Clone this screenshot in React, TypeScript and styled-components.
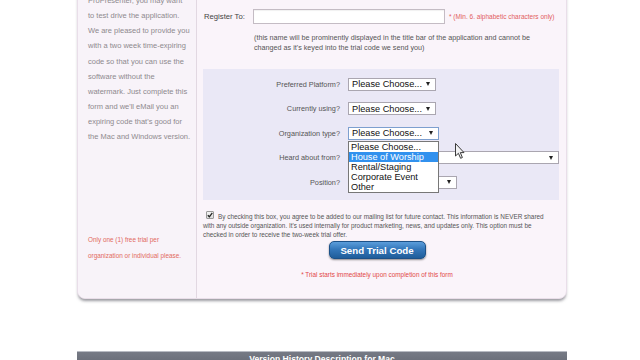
import React from 'react';
import styled, { createGlobalStyle } from 'styled-components';

const Global = createGlobalStyle`
  html, body { margin: 0; padding: 0; background: #ffffff; }
  body { font-family: "Liberation Sans", Arial, sans-serif; }
  #root { width: 640px; height: 360px; overflow: hidden; }
`;

const Page = styled.div`
  position: relative;
  width: 640px;
  height: 360px;
  overflow: hidden;
`;

const Card = styled.div`
  margin: -12px 0 0 77px;
  width: 490px;
  height: 311px;
  box-sizing: border-box;
  display: grid;
  grid-template-columns: 119px 1fr;
  background: #faf4fa;
  border: 1px solid #e9dee9;
  border-radius: 0 0 8px 8px;
  box-shadow: 0 3px 3px -1px rgba(70, 70, 80, 0.55);
`;

const Side = styled.div`
  box-sizing: border-box;
  border-right: 1px solid #e2d8e2;
  padding: 4px 0 0 10px;
  background: #f8f3f9;
  border-radius: 0 0 0 8px;
`;

const Intro = styled.div`
  font-size: 7.5px;
  line-height: 15.15px;
  color: #8e8a8e;
  white-space: nowrap;
`;

const Limit = styled.div`
  margin-top: 87.5px;
  font-size: 6.4px;
  line-height: 16px;
  color: #e26a60;
  white-space: nowrap;
`;

const Main = styled.div`
  padding-top: 20px;
`;

const RegisterRow = styled.div`
  display: flex;
  align-items: center;
  padding-left: 7px;
`;

const RegLabel = styled.span`
  width: 49px;
  font-size: 7.7px;
  color: #444;
`;

const TextInput = styled.div`
  width: 192px;
  height: 15px;
  box-sizing: border-box;
  background: #fff;
  border: 1px solid #c4bcc4;
  box-shadow: inset 0 1px 1px rgba(0, 0, 0, 0.06);
`;

const Hint = styled.span`
  margin-left: 4px;
  font-size: 6.5px;
  color: #e26060;
  white-space: nowrap;
`;

const Note = styled.div`
  margin: 8.7px 0 0 57px;
  font-size: 7.2px;
  line-height: 10px;
  color: #555;
  white-space: nowrap;
`;

const Panel = styled.div`
  margin: 16px 0 0 6px;
  width: 356px;
  box-sizing: border-box;
  padding: 9px 0 11px;
  background: #eae8f6;
  display: grid;
  grid-template-columns: 137px auto;
  column-gap: 8px;
  row-gap: 11.5px;
  align-items: center;
`;

const FieldLabel = styled.span`
  text-align: right;
  font-size: 7.3px;
  color: #555;
  white-space: nowrap;
`;

const SelectBox = styled.div<{ $w: number; $focus?: boolean }>`
  position: relative;
  justify-self: start;
  width: ${p => p.$w}px;
  height: 13px;
  box-sizing: border-box;
  display: flex;
  align-items: center;
  justify-content: space-between;
  padding: 0 5px 0 3px;
  background: #fff;
  border: 1px solid ${p => (p.$focus ? '#7d9fcf' : '#aaa6b0')};
  font-size: 9.2px;
  color: #111;
  white-space: nowrap;
`;

const Arrow = styled.span`
  width: 0;
  height: 0;
  border-left: 2.5px solid transparent;
  border-right: 2.5px solid transparent;
  border-top: 4px solid #222;
`;

const List = styled.div`
  position: absolute;
  z-index: 10;
  top: calc(100% + 2px);
  left: -1px;
  width: 91px;
  box-sizing: border-box;
  background: #fff;
  border: 1px solid #777;
`;

const Option = styled.div<{ $active?: boolean }>`
  height: 10px;
  line-height: 10px;
  padding-left: 2px;
  font-size: 9.2px;
  color: ${p => (p.$active ? '#fff' : '#111')};
  background: ${p => (p.$active ? '#3191ee' : 'transparent')};
`;

const Consent = styled.div`
  margin: 12px 0 0 6px;
  font-size: 6.4px;
  color: #555;
  white-space: nowrap;
`;

const ConsentLine = styled.div`
  height: 9px;
  line-height: 9px;
  display: flex;
  align-items: center;
`;

const Check = styled.span`
  display: inline-flex;
  align-items: center;
  justify-content: center;
  width: 8px;
  height: 8px;
  box-sizing: border-box;
  margin: -3px 4.5px 0 2.5px;
  border: 1px solid #9a9a9a;
  background: linear-gradient(#f4f4f4, #dcdcdc);
  border-radius: 1px;
`;

const Actions = styled.div`
  width: 360px;
  margin-top: 2.5px;
  display: flex;
  flex-direction: column;
  align-items: center;
`;

const SendButton = styled.button`
  width: 97px;
  height: 18px;
  padding: 0;
  border: 1px solid #1c5188;
  border-radius: 5px;
  background: linear-gradient(#5b9ddb 0%, #3477ba 45%, #1f5d9a 100%);
  box-shadow: 0 1px 2px rgba(0, 0, 0, 0.45);
  color: #fff;
  font-family: "Liberation Sans", Arial, sans-serif;
  font-weight: bold;
  font-size: 9.7px;
`;

const TrialNote = styled.div`
  margin-top: 11.5px;
  font-size: 6.4px;
  line-height: 8px;
  color: #e24848;
  white-space: nowrap;
`;

const VersionBar = styled.div`
  margin: 52px 0 0 77px;
  width: 490px;
  height: 20px;
  box-sizing: border-box;
  padding-top: 2px;
  background: linear-gradient(#767a85, #5f636e);
  border-top: 1px solid #b8bbc3;
  color: #fff;
  font-weight: bold;
  font-size: 8.6px;
  text-align: center;
`;

const Cursor = styled.svg`
  position: absolute;
  left: 455px;
  top: 143px;
  z-index: 20;
`;

const introLines = [
  'ProPresenter, you may want',
  'to test drive the application.',
  'We are pleased to provide you',
  'with a two week time-expiring',
  'code so that you can use the',
  'software without the',
  'watermark. Just complete this',
  "form and we'll eMail you an",
  "expiring code that's good for",
  'the Mac and Windows version.',
];

const fields = [
  { label: 'Preferred Platform?', w: 88 },
  { label: 'Currently using?', w: 88 },
  { label: 'Organization type?', w: 91, open: true },
  { label: 'Heard about from?', w: 211 },
  { label: 'Position?', w: 109 },
];

const options = ['Please Choose...', 'House of Worship', 'Rental/Staging', 'Corporate Event', 'Other'];

export default function App() {
  return (
    <Page>
      <Global />
      <Card>
        <Side>
          <Intro>
            {introLines.map(l => (
              <div key={l}>{l}</div>
            ))}
          </Intro>
          <Limit>
            <div>Only one (1) free trial per</div>
            <div>organization or individual please.</div>
          </Limit>
        </Side>
        <Main>
          <RegisterRow>
            <RegLabel>Register To:</RegLabel>
            <TextInput />
            <Hint>* (Min. 6. alphabetic characters only)</Hint>
          </RegisterRow>
          <Note>
            <div>(this name will be prominently displayed in the title bar of the application and cannot be</div>
            <div>changed as it's keyed into the trial code we send you)</div>
          </Note>
          <Panel>
            {fields.map(f => (
              <React.Fragment key={f.label}>
                <FieldLabel>{f.label}</FieldLabel>
                <SelectBox $w={f.w} $focus={f.open}>
                  <span>Please Choose...</span>
                  <Arrow />
                  {f.open && (
                    <List>
                      {options.map((o, i) => (
                        <Option key={o} $active={i === 1}>
                          {o}
                        </Option>
                      ))}
                    </List>
                  )}
                </SelectBox>
              </React.Fragment>
            ))}
          </Panel>
          <Consent>
            <ConsentLine>
              <Check>
                <svg width="6" height="6" viewBox="0 0 6 6">
                  <path d="M0.8 3.2 L2.4 4.8 L5.3 0.9" fill="none" stroke="#222" strokeWidth="1.3" />
                </svg>
              </Check>
              By checking this box, you agree to be added to our mailing list for future contact. This information is NEVER shared
            </ConsentLine>
            <ConsentLine>with any outside organization. It's used internally for product marketing, news, and updates only. This option must be</ConsentLine>
            <ConsentLine>checked in order to receive the two-week trial offer.</ConsentLine>
          </Consent>
          <Actions>
            <SendButton>Send Trial Code</SendButton>
            <TrialNote>* Trial starts immediately upon completion of this form</TrialNote>
          </Actions>
        </Main>
      </Card>
      <VersionBar>Version History Description for Mac</VersionBar>
      <Cursor width="11" height="17" viewBox="0 0 11 17">
        <path
          d="M0.5 0.5 L0.5 13 L3.4 10.3 L5.6 15.3 L7.4 14.5 L5.3 9.6 L9 9.6 Z"
          fill="#f2f2f4"
          stroke="#3a3a3a"
          strokeWidth="1"
          strokeLinejoin="round"
        />
      </Cursor>
    </Page>
  );
}
